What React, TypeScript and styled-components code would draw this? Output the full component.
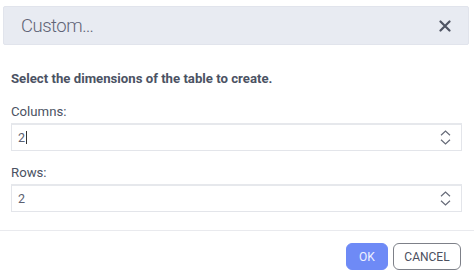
import React from "react";
import styled, { createGlobalStyle } from "styled-components";

const Global = createGlobalStyle`
  html, body { margin: 0; padding: 0; background: #fff; }
  body { font-family: Roboto, "Liberation Sans", Arial, sans-serif; }
  * { box-sizing: border-box; }
`;

const Dialog = styled.div`
  width: 474px;
  height: 279px;
  background: #fff;
  padding-top: 6px;
`;

const Header = styled.div`
  margin: 0 5px 0 3px;
  height: 39px;
  background: #e8ebf2;
  border: 1px solid #e1e4ec;
  border-radius: 2px;
  display: flex;
  align-items: center;
  justify-content: space-between;
  padding: 0 15px 0 17px;
`;

const Title = styled.div`
  font-size: 18.5px;
  font-weight: 300;
  color: #5f6476;
  letter-spacing: -0.5px;
`;

const Close = styled.button`
  border: none;
  background: none;
  padding: 0;
  width: 16px;
  height: 16px;
  display: flex;
  align-items: center;
  justify-content: center;
  cursor: pointer;
`;

const Body = styled.div`
  padding: 26px 12px 0 11px;
`;

const Lead = styled.div`
  font-size: 13.2px;
  font-weight: 700;
  color: #4b5263;
  margin-bottom: 18px;
`;

const Label = styled.div`
  font-size: 13.2px;
  color: #4b5263;
  margin-bottom: 4px;
`;

const Field = styled.div`
  height: 28px;
  border: 1px solid #e3e5ea;
  border-top: 2px solid #e6e8ec;
  display: flex;
  align-items: center;
  justify-content: space-between;
  padding: 0 10px 0 6px;
  margin-bottom: 14px;
`;

const Value = styled.span<{ $caret?: boolean }>`
  font-size: 12.5px;
  color: #5b6070;
  display: inline-flex;
  align-items: center;
  &::after {
    content: "";
    display: ${(p) => (p.$caret ? "inline-block" : "none")};
    width: 1px;
    height: 13px;
    margin-left: 1px;
    background: #333;
  }
`;

const Spinner = styled.div`
  display: flex;
  flex-direction: column;
  gap: 3px;
`;

const Footer = styled.div`
  margin-top: 18px;
  border-top: 1px solid #e9eaee;
  display: flex;
  justify-content: flex-end;
  gap: 5px;
  padding: 12px 13px 0 0;
`;

const Button = styled.button<{ $primary?: boolean }>`
  height: 27px;
  border-radius: 6px;
  font-family: Roboto, "Liberation Sans", Arial, sans-serif;
  font-size: 12px;
  padding: 0;
  cursor: pointer;
  width: ${(p) => (p.$primary ? "42px" : "68px")};
  background: ${(p) => (p.$primary ? "#6e8af6" : "#fff")};
  color: ${(p) => (p.$primary ? "#eef1ff" : "#4b5060")};
  border: ${(p) => (p.$primary ? "1px solid #6e8af6" : "1px solid #7d8088")};
`;

function Arrows() {
  return (
    <Spinner>
      <svg width="11" height="6" viewBox="0 0 11 6">
        <path d="M1 5.2L5.5 1L10 5.2" fill="none" stroke="#666b78" strokeWidth="1.2" />
      </svg>
      <svg width="11" height="6" viewBox="0 0 11 6">
        <path d="M1 0.8L5.5 5L10 0.8" fill="none" stroke="#666b78" strokeWidth="1.2" />
      </svg>
    </Spinner>
  );
}

export default function App() {
  return (
    <>
      <Global />
      <Dialog>
        <Header>
          <Title>Custom…</Title>
          <Close aria-label="close">
            <svg width="12" height="12" viewBox="0 0 12 12">
              <path d="M1.5 1.5L10.5 10.5M10.5 1.5L1.5 10.5" stroke="#4f5463" strokeWidth="2.2" strokeLinecap="round" />
            </svg>
          </Close>
        </Header>
        <Body>
          <Lead>Select the dimensions of the table to create.</Lead>
          <Label>Columns:</Label>
          <Field>
            <Value $caret>2</Value>
            <Arrows />
          </Field>
          <Label>Rows:</Label>
          <Field>
            <Value>2</Value>
            <Arrows />
          </Field>
        </Body>
        <Footer>
          <Button $primary>OK</Button>
          <Button>CANCEL</Button>
        </Footer>
      </Dialog>
    </>
  );
}
